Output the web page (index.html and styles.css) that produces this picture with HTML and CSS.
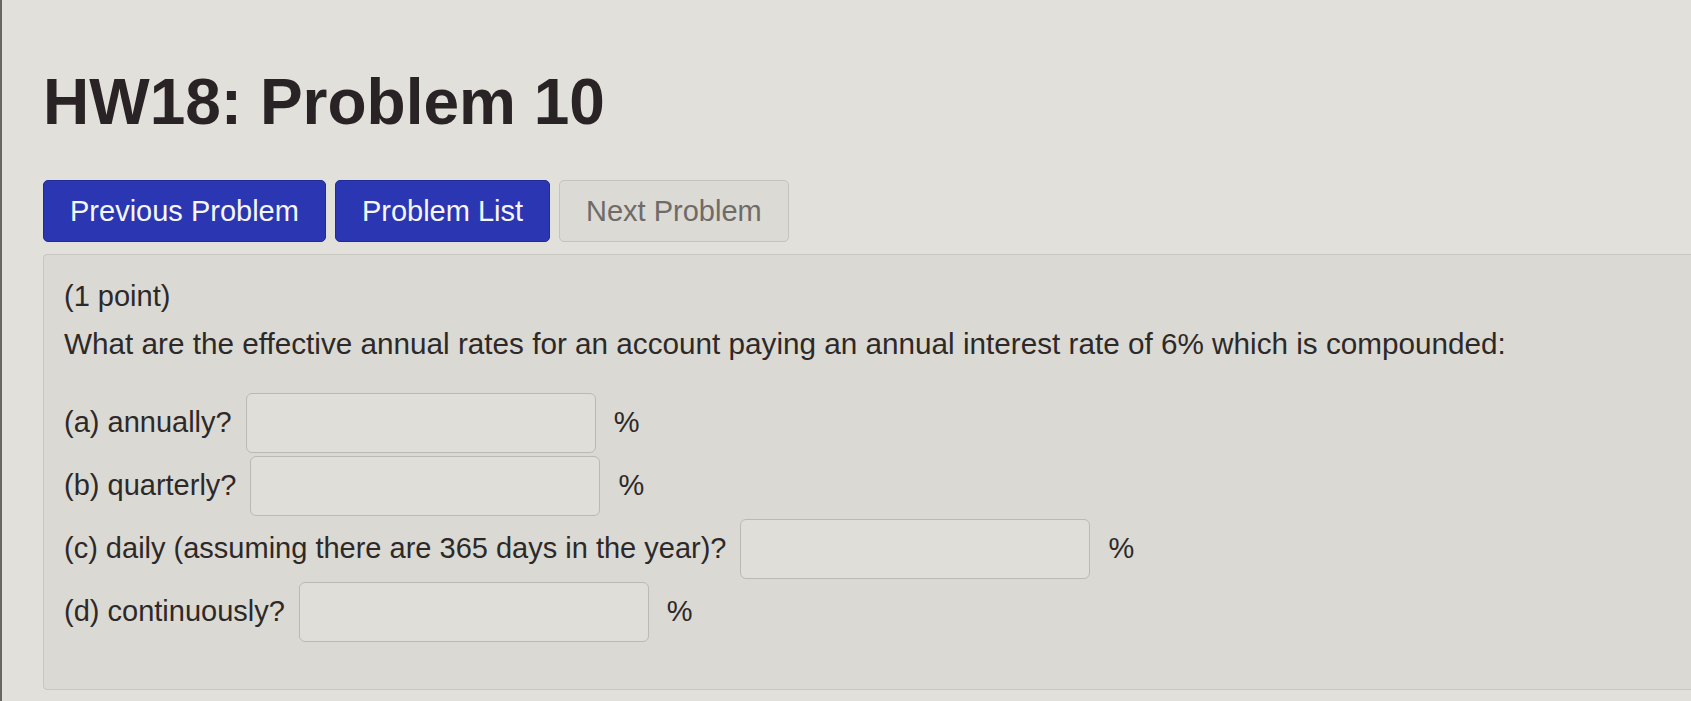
FILE: index.html
```html
<!DOCTYPE html>
<html lang="en">
<head>
  <meta charset="UTF-8">
  <meta name="viewport" content="width=device-width, initial-scale=1.0">
  <title>HW18: Problem 10</title>
  <link rel="stylesheet" href="styles.css">
</head>
<body>
  <div class="page">
    <h1 class="title">HW18: Problem 10</h1>

    <!-- navigation between problems -->
    <div class="nav">
      <button class="btn btn-primary">Previous Problem</button>
      <button class="btn btn-primary">Problem List</button>
      <button class="btn btn-disabled" disabled>Next Problem</button>
    </div>

    <!-- problem body -->
    <div class="problem">
      <p class="points">(1 point)</p>
      <p class="question">What are the effective annual rates for an account paying an annual interest rate of 6% which is compounded:</p>

      <div class="answers">
        <div class="answer-row">
          <label for="ansA">(a) annually?</label>
          <input class="answer" id="ansA" type="text">
          <span class="unit">%</span>
        </div>
        <div class="answer-row">
          <label for="ansB">(b) quarterly?</label>
          <input class="answer" id="ansB" type="text">
          <span class="unit">%</span>
        </div>
        <div class="answer-row">
          <label for="ansC">(c) daily (assuming there are 365 days in the year)?</label>
          <input class="answer" id="ansC" type="text">
          <span class="unit">%</span>
        </div>
        <div class="answer-row">
          <label for="ansD">(d) continuously?</label>
          <input class="answer" id="ansD" type="text">
          <span class="unit">%</span>
        </div>
      </div>
    </div>
  </div>
</body>
</html>
```

FILE: styles.css
```css
body {
  margin: 0;
  font-family: "Liberation Sans", Arial, sans-serif;
  color: #2d2929;
  background: linear-gradient(90deg, #6a6763 0, #6a6763 2px, transparent 2px), #e2e0db;
  overflow: hidden;
}

.page {
  padding: 66px 0 0 43px;
}

.title {
  margin: 0;
  font-size: 64px;
  line-height: 72px;
  font-weight: bold;
  color: #2a2325;
}

.nav {
  display: flex;
  gap: 9px;
  margin-top: 42px;
}

.btn {
  font-family: inherit;
  font-size: 29px;
  line-height: 30px;
  padding: 15px 26px;
  border: 1px solid;
  border-radius: 5px;
  cursor: pointer;
}

.btn-primary {
  background-color: #2b36b3;
  border-color: #222b93;
  color: #f6f6fa;
}

.btn-disabled {
  background-color: #dcdad5;
  border-color: #c5c3be;
  color: #6e6b68;
  cursor: default;
}

.problem {
  margin-top: 12px;
  margin-right: -30px;
  background-color: #dbd9d4;
  border: 1px solid #c8c6c1;
  border-radius: 4px;
  padding: 17px 20px 46px;
}

.points,
.question {
  margin: 0;
  font-size: 29px;
  line-height: 48px;
}

.question {
  font-size: 29.7px;
}

.answers {
  margin-top: 23px;
}

.answer-row {
  display: flex;
  align-items: center;
  height: 63px;
  font-size: 29px;
}

.answer {
  box-sizing: border-box;
  width: 350px;
  height: 60px;
  margin: 0 18px 0 14px;
  border: 1px solid #bcb9b4;
  border-radius: 6px;
  background-color: #e0ded9;
  font-size: 20px;
}
```
